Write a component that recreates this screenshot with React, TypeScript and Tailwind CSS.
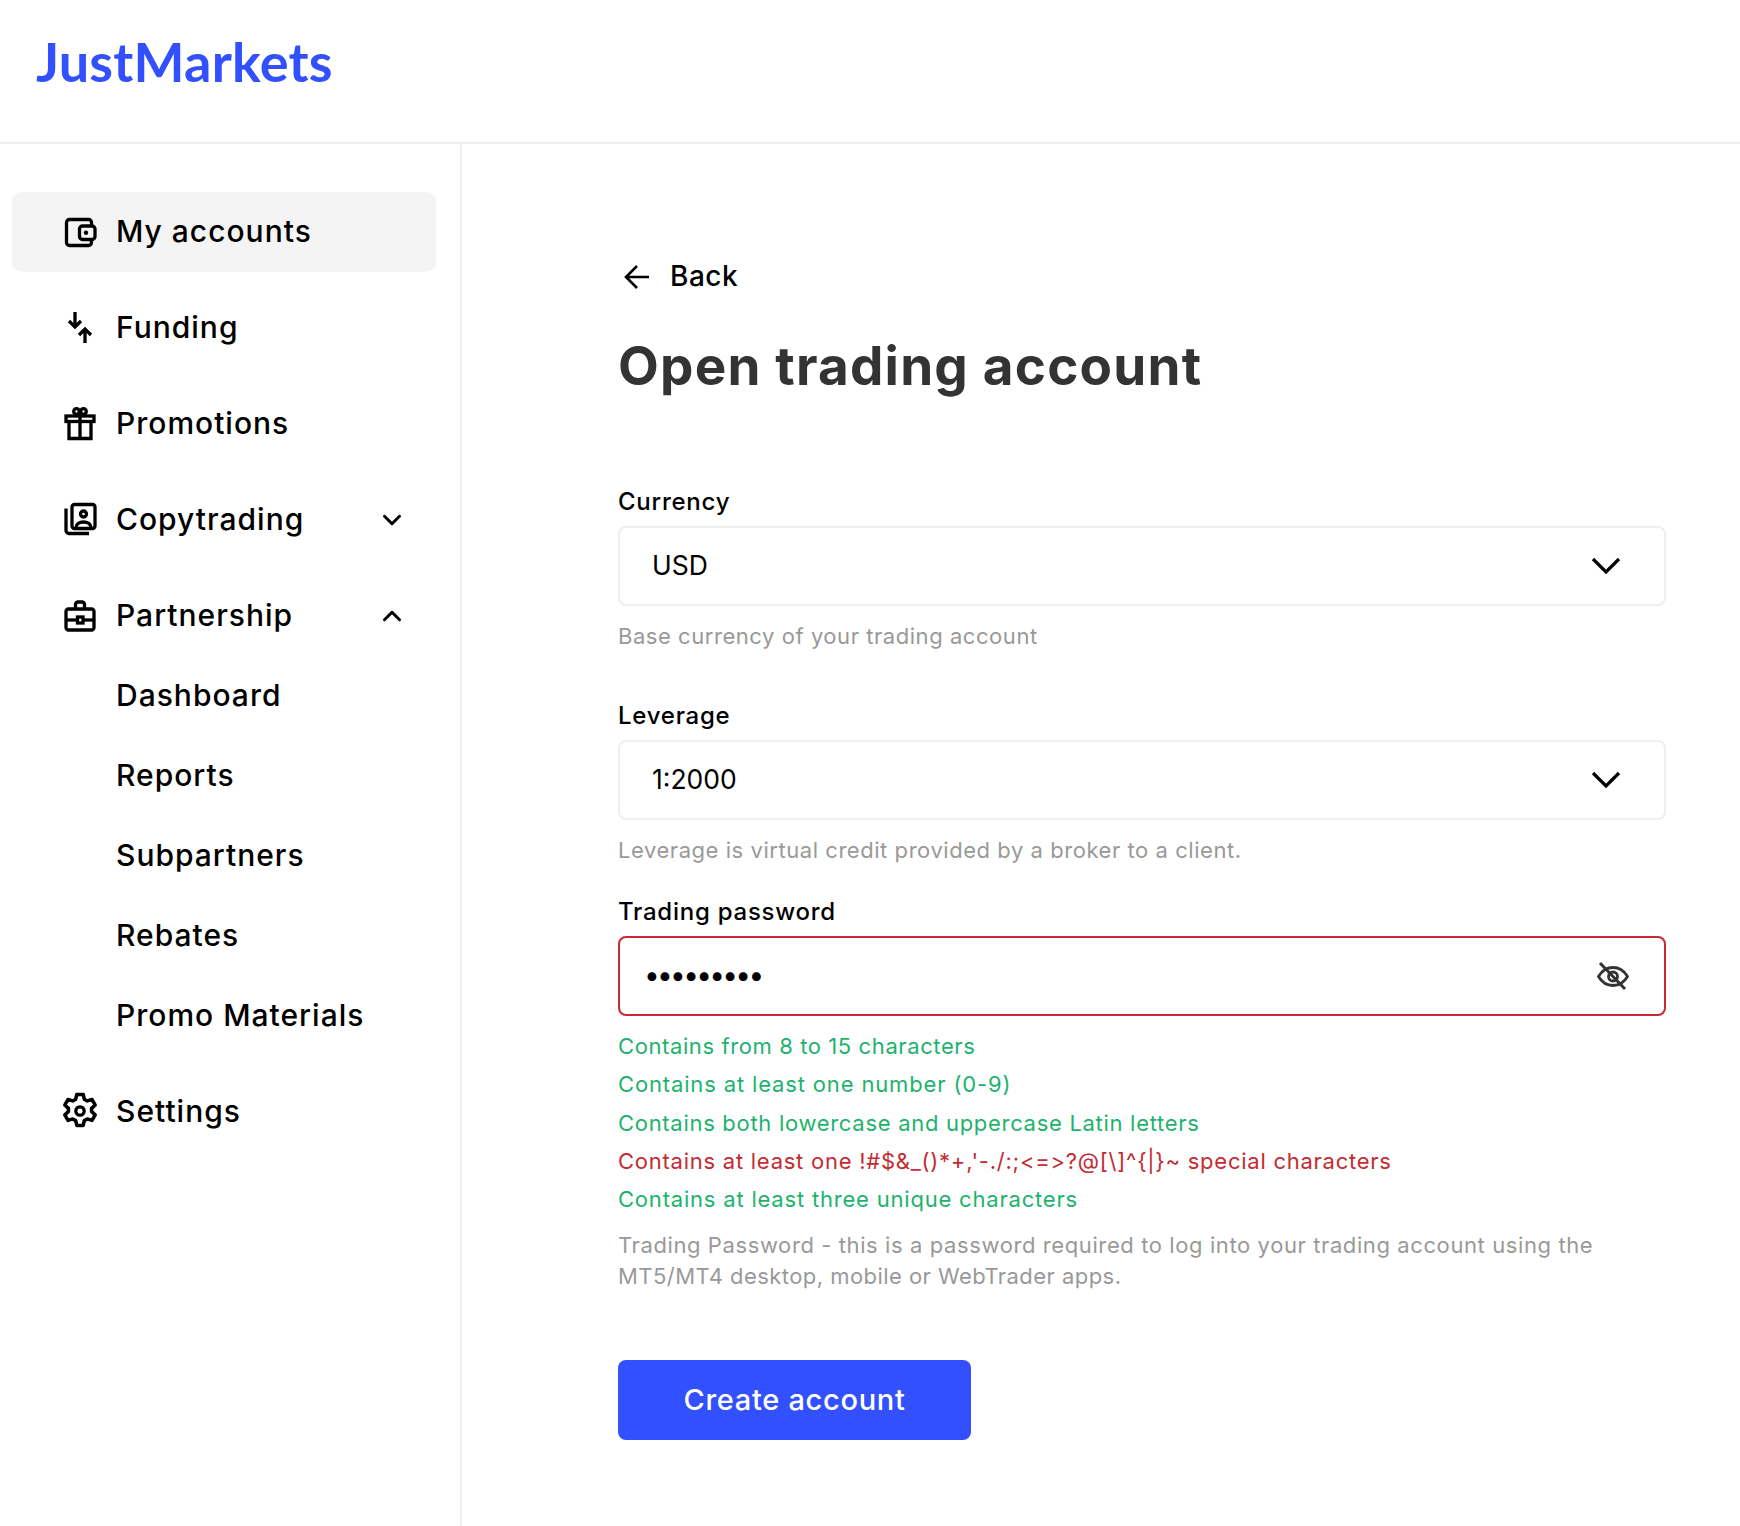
import { ChevronDown, ChevronUp } from "lucide-react";
import type { ReactNode } from "react";

const FONT = "font-['Inter','Liberation_Sans',sans-serif]";

function Icon({ children }: { children: ReactNode }) {
  return (
    <svg
      width="50"
      height="50"
      viewBox="0 0 50 50"
      fill="none"
      stroke="#000"
      strokeWidth="3.3"
      strokeLinecap="square"
      strokeLinejoin="round"
      className="mb-[2px] shrink-0"
    >
      {children}
    </svg>
  );
}

const WalletIcon = () => (
  <Icon>
    <path d="M14.5 13.5h19a3 3 0 0 1 3 3v20a3 3 0 0 1-3 3h-19a3 3 0 0 1-3-3v-20a3 3 0 0 1 3-3z" />
    <rect x="24.5" y="20" width="15.5" height="13.5" rx="3" fill="#f4f4f4" />
    <circle cx="31" cy="26.7" r="2.2" fill="#000" stroke="none" />
  </Icon>
);

const FundingIcon = () => (
  <Icon>
    <path d="M20 10v15M14 19l6 6 6-6" strokeLinecap="butt" strokeLinejoin="miter" />
    <path d="M30 41V27M24 33l6-6 6 6" strokeLinecap="butt" strokeLinejoin="miter" />
  </Icon>
);

const GiftIcon = () => (
  <Icon>
    <rect x="11" y="18" width="28" height="5.5" strokeLinejoin="miter" />
    <path d="M14 23.5V40.5H36V23.5M25 18V40.5" strokeLinejoin="miter" strokeLinecap="butt" />
    <circle cx="21.5" cy="13.5" r="2.8" />
    <circle cx="28.5" cy="13.5" r="2.8" />
  </Icon>
);

const CopyIcon = () => (
  <Icon>
    <rect x="17" y="10.5" width="23" height="24" rx="2.5" />
    <circle cx="28.5" cy="20" r="3" />
    <path d="M21 33.5c0-3.5 3.5-5.5 7.5-5.5s7.5 2 7.5 5.5" strokeLinecap="butt" />
    <path d="M11 14.5V36.5a3 3 0 0 0 3 3H34" strokeLinecap="butt" />
  </Icon>
);

const BriefcaseIcon = () => (
  <Icon>
    <rect x="11" y="19" width="28" height="21" rx="2.5" />
    <path d="M20.5 19v-4.5a2.5 2.5 0 0 1 2.5-2.5h4a2.5 2.5 0 0 1 2.5 2.5V19" strokeLinecap="butt" />
    <path d="M11 30h28" strokeLinecap="butt" />
    <rect x="22.5" y="27" width="5.5" height="6" fill="#fff" strokeLinejoin="miter" />
  </Icon>
);

const GearIcon = () => (
  <Icon>
    <path
      transform="translate(25 25) scale(1.07) translate(-25 -25)"
      d="M22 9.5h6l1 4.5 2.8 1.6 4.4-1.4 3 5.2-3.4 3.1v3l3.4 3.1-3 5.2-4.4-1.4-2.8 1.6-1 4.5h-6l-1-4.5-2.8-1.6-4.4 1.4-3-5.2 3.4-3.1v-3l-3.4-3.1 3-5.2 4.4 1.4 2.8-1.6z"
      strokeLinecap="butt"
    />
    <circle cx="25" cy="25" r="4.2" />
  </Icon>
);

const EyeOffIcon = () => (
  <svg width="34" height="30" viewBox="0 0 34 30" fill="none" stroke="#333" strokeWidth="2.8" className="shrink-0">
    <path d="M2.5 15.5C6 9.5 11 6.5 17 6.5s11 3 14.5 9C28 21.5 23 24.5 17 24.5S6 21.5 2.5 15.5z" />
    <circle cx="17" cy="15.5" r="4.5" />
    <path d="M4 2l25 26" strokeWidth="3" />
  </svg>
);

function NavItem({
  icon,
  label,
  active,
  chevron,
}: {
  icon: ReactNode;
  label: string;
  active?: boolean;
  chevron?: "up" | "down";
}) {
  return (
    <div className={`flex h-[80px] items-center rounded-[10px] pl-[43px] pr-[29px] ${active ? "bg-[#f4f4f4]" : ""}`}>
      {icon}
      <span className="mb-[2px] ml-[11px] flex-1 text-[30px] font-medium leading-[40px] tracking-[1px] text-black">{label}</span>
      {chevron === "down" && <ChevronDown size={30} strokeWidth={2.4} className="text-black" />}
      {chevron === "up" && <ChevronUp size={30} strokeWidth={2.4} className="text-black" />}
    </div>
  );
}

function SubItem({ label }: { label: string }) {
  return (
    <div className="flex h-[80px] items-center pb-[2px] pl-[104px] text-[30px] font-medium leading-[40px] tracking-[1px] text-black">
      {label}
    </div>
  );
}

function SelectField({ label, value, hint }: { label: string; value: string; hint: string }) {
  return (
    <div>
      <div className="h-[32px] text-[24px] font-medium leading-[32px] tracking-[0.75px] text-black">{label}</div>
      <div className="mt-[8px] flex h-[80px] items-center justify-between rounded-[8px] border-2 border-[#eeeeee] pl-[32px] pr-[42px]">
        <span className="mb-[2px] text-[26.5px] leading-[36px] text-black">{value}</span>
        <svg width="32" height="20" viewBox="0 0 32 20" fill="none" stroke="#000" strokeWidth="3.2">
          <path d="M3 3l13 13L29 3" />
        </svg>
      </div>
      <div className="mt-[14px] h-[32px] text-[22px] leading-[32px] tracking-[0.55px] text-[#999999]">{hint}</div>
    </div>
  );
}

const rules = [
  { text: "Contains from 8 to 15 characters", cls: "tracking-[0.6px] text-[#1eb26e]" },
  { text: "Contains at least one number (0-9)", cls: "tracking-[0.85px] text-[#1eb26e]" },
  { text: "Contains both lowercase and uppercase Latin letters", cls: "tracking-[0.7px] text-[#1eb26e]" },
  { text: "Contains at least one !#$&_()*+,'-./:;<=>?@[\\]^{|}~ special characters", cls: "tracking-[0.75px] text-[#c42b33]" },
  { text: "Contains at least three unique characters", cls: "tracking-[0.8px] text-[#1eb26e]" },
];

export default function App() {
  return (
    <div className={`flex min-h-[1526px] flex-col bg-white ${FONT}`}>
      {/* Header */}
      <header className="flex h-[144px] shrink-0 items-center border-b-2 border-[#eeeeee] pb-[18px] pl-[36px]">
        <span className="font-['Lato',sans-serif] text-[54px] font-bold leading-[60px] tracking-[0.2px] text-[#3350ff]">
          JustMarkets
        </span>
      </header>

      <div className="flex flex-1">
        {/* Sidebar */}
        <aside className="w-[462px] shrink-0 border-r-2 border-[#eeeeee] pl-[12px] pr-[24px] pt-[48px]">
          <div className="flex flex-col gap-[16px]">
            <NavItem icon={<WalletIcon />} label="My accounts" active />
            <NavItem icon={<FundingIcon />} label="Funding" />
            <NavItem icon={<GiftIcon />} label="Promotions" />
            <NavItem icon={<CopyIcon />} label="Copytrading" chevron="down" />
            <div>
              <NavItem icon={<BriefcaseIcon />} label="Partnership" chevron="up" />
              <SubItem label="Dashboard" />
              <SubItem label="Reports" />
              <SubItem label="Subpartners" />
              <SubItem label="Rebates" />
              <SubItem label="Promo Materials" />
            </div>
            <NavItem icon={<GearIcon />} label="Settings" />
          </div>
        </aside>

        {/* Form */}
        <main className="w-[1204px] pl-[156px] pt-[112px]">
          <div className="flex h-[40px] items-center gap-[19px]">
            <svg width="28" height="28" viewBox="0 0 28 28" fill="none" stroke="#000" strokeWidth="2.6" className="ml-[5px] mt-[2px]">
              <path d="M26 14H3M14 3L3 14l11 11" />
            </svg>
            <span className="text-[28px] font-medium leading-[40px] tracking-[0.5px] text-black">Back</span>
          </div>

          <h1 className="mt-[38px] h-[64px] text-[53px] font-bold leading-[64px] tracking-[1.2px] text-[#333333]">
            Open trading account
          </h1>

          <div className="mt-[88px]">
            <SelectField label="Currency" value="USD" hint="Base currency of your trading account" />
          </div>
          <div className="mt-[48px]">
            <SelectField label="Leverage" value="1:2000" hint="Leverage is virtual credit provided by a broker to a client." />
          </div>

          <div className="mt-[30px] h-[32px] text-[24px] font-medium leading-[32px] tracking-[0.75px] text-black">
            Trading password
          </div>
          <div className="mt-[8px] flex h-[80px] items-center justify-between rounded-[8px] border-2 border-[#c42b33] pl-[24px] pr-[34px]">
            <input
              type="password"
              readOnly
              value="Abcdef123"
              className="mb-[2px] w-[400px] bg-transparent text-[28px] tracking-[-2.7px] text-black outline-none"
            />
            <EyeOffIcon />
          </div>

          <div className="mt-[11px] [font-feature-settings:'calt'_0,'liga'_0]">
            {rules.map((rule) => (
              <div key={rule.text} className={`h-[38.3px] text-[22px] leading-[38.3px] ${rule.cls}`}>
                {rule.text}
              </div>
            ))}
          </div>

          <p className="mt-[11.5px] text-[22px] leading-[31px] tracking-[0.6px] text-[#999999]">
            Trading Password - this is a password required to log into your trading account using the
            <br />
            <span className="tracking-[0.45px]">MT5/MT4 desktop, mobile or WebTrader apps.</span>
          </p>

          <button
            type="button"
            className="mt-[68px] flex h-[80px] w-[353px] items-center justify-center rounded-[8px] bg-[#3350ff] text-[29px] font-medium tracking-[0.7px] text-white"
          >
            Create account
          </button>
        </main>
      </div>
    </div>
  );
}
